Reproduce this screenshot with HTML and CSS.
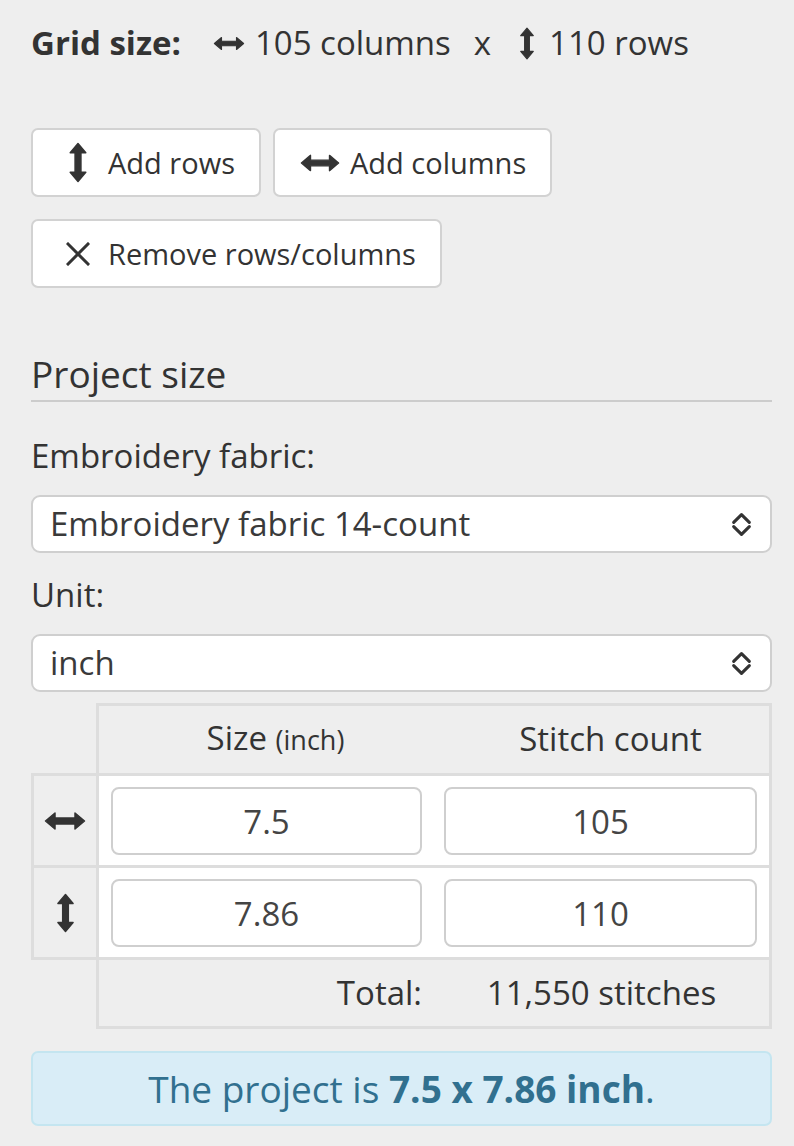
FILE: index.html
```html
<!DOCTYPE html>
<html lang="en">
<head>
<meta charset="utf-8">
<title>Project size</title>
<link rel="stylesheet" href="styles.css">
</head>
<body>
<div class="page">
  <div class="grid-size">
    <strong class="gs-label">Grid size:</strong>
    <svg class="ico-h-sm" viewBox="0 0 42 20" aria-hidden="true"><path d="M1.5 10 L11 2 V7 H31 V2 L40.5 10 L31 18 V13 H11 V18 Z"/></svg>
    <span class="gs-val">105 columns</span>
    <span class="gs-x">x</span>
    <svg class="ico-v-sm" viewBox="0 0 20 42" aria-hidden="true"><path d="M10 1.5 L18 11 H13 V31 H18 L10 40.5 L2 31 H7 V11 H2 Z"/></svg>
    <span class="gs-val">110 rows</span>
  </div>

  <div class="btn-row first">
    <button class="btn" type="button">
      <span class="btn-ico"><svg class="ico-v-btn" viewBox="0 0 20 42" aria-hidden="true"><path d="M10 1.5 L18 11 H13 V31 H18 L10 40.5 L2 31 H7 V11 H2 Z"/></svg></span>
      <span>Add rows</span>
    </button>
    <button class="btn" type="button">
      <span class="btn-ico"><svg class="ico-h-btn" viewBox="0 0 42 20" aria-hidden="true"><path d="M1.5 10 L11 2 V7 H31 V2 L40.5 10 L31 18 V13 H11 V18 Z"/></svg></span>
      <span>Add columns</span>
    </button>
  </div>
  <div class="btn-row second">
    <button class="btn" type="button">
      <span class="btn-ico"><svg class="ico-x" viewBox="0 0 24 24" aria-hidden="true"><path d="M2 2 L22 22 M22 2 L2 22"/></svg></span>
      <span>Remove rows/columns</span>
    </button>
  </div>

  <h2 class="section-title">Project size</h2>

  <label class="field-label">Embroidery fabric:</label>
  <div class="select">
    <span>Embroidery fabric 14-count</span>
    <svg class="chev" viewBox="0 0 20 24" aria-hidden="true"><path d="M2.5 10 L10 2.5 L17.5 10 M2.5 14 L10 21.5 L17.5 14"/></svg>
  </div>

  <label class="field-label">Unit:</label>
  <div class="select">
    <span>inch</span>
    <svg class="chev" viewBox="0 0 20 24" aria-hidden="true"><path d="M2.5 10 L10 2.5 L17.5 10 M2.5 14 L10 21.5 L17.5 14"/></svg>
  </div>

  <table class="size-table">
    <colgroup><col class="c0"><col><col></colgroup>
    <thead>
      <tr><th class="corner"></th><th class="hd l">Size <small>(inch)</small></th><th class="hd r">Stitch count</th></tr>
    </thead>
    <tbody>
      <tr>
        <th class="axis"><svg class="ico-h-tb" viewBox="0 0 42 20" aria-hidden="true"><path d="M1.5 10 L11 2 V7 H31 V2 L40.5 10 L31 18 V13 H11 V18 Z"/></svg></th>
        <td class="cell l"><input class="num" type="text" value="7.5"></td>
        <td class="cell r"><input class="num" type="text" value="105"></td>
      </tr>
      <tr>
        <th class="axis"><svg class="ico-v-tb" viewBox="0 0 20 42" aria-hidden="true"><path d="M10 1.5 L18 11 H13 V31 H18 L10 40.5 L2 31 H7 V11 H2 Z"/></svg></th>
        <td class="cell l"><input class="num" type="text" value="7.86"></td>
        <td class="cell r"><input class="num" type="text" value="110"></td>
      </tr>
    </tbody>
    <tfoot>
      <tr><td class="corner"></td><td class="total-label l">Total:</td><td class="total-value r">11,550 stitches</td></tr>
    </tfoot>
  </table>

  <div class="alert">The project is <strong>7.5 x 7.86 inch</strong>.</div>
</div>
</body>
</html>
```

FILE: styles.css
```css
html, body {
  margin: 0;
  padding: 0;
  background: #eeeeee;
}

.page {
  padding: 19px 22px 0 31px;
  font-family: "Open Sans", "DejaVu Sans", sans-serif;
  color: #333333;
  font-size: 33px;
  line-height: 48px;
}

svg path { fill: #333333; stroke: #333333; stroke-width: 1.5; stroke-linejoin: round; }

.grid-size {
  display: flex;
  align-items: center;
  height: 48px;
}
.gs-label { font-weight: 700; margin-right: 32px; }
.ico-h-sm { width: 32px; height: 15px; margin-right: 10px; }
.ico-v-sm { width: 16px; height: 33px; margin-right: 14px; }
.gs-x { margin: 0 28px 0 23px; }

.btn-row { display: flex; gap: 12px; }
.btn-row.first { margin-top: 61px; }
.btn-row.second { margin-top: 22px; }

.btn {
  display: inline-flex;
  align-items: center;
  gap: 10px;
  height: 69px;
  padding: 0 24px 0 25px;
  background: #ffffff;
  border: 2px solid #d2d2d2;
  border-radius: 7px;
  font-family: inherit;
  font-size: 29px;
  color: #333333;
  line-height: 40px;
}
.btn-ico { width: 40px; display: flex; justify-content: center; align-items: center; }
.ico-v-btn { width: 20px; height: 41px; }
.ico-h-btn { width: 40px; height: 20px; }
.ico-x { width: 24px; height: 24px; }
.ico-x path { fill: none; stroke-width: 3; stroke-linecap: square; }

.section-title {
  margin: 64px 0 0;
  padding: 0 0 5px;
  font-size: 37px;
  font-weight: 400;
  line-height: 43px;
  border-bottom: 2px solid #cccccc;
}

.field-label { display: block; margin-top: 30px; }
.select + .field-label { margin-top: 18px; }

.select {
  margin-top: 15px;
  height: 58px;
  box-sizing: border-box;
  display: flex;
  align-items: center;
  justify-content: space-between;
  padding: 0 18px 0 17px;
  background: #ffffff;
  border: 2px solid #cfcfcf;
  border-radius: 9px;
  color: #3a3a3a;
}
.chev { width: 21px; height: 25px; }
.chev path { fill: none; stroke-width: 3; stroke-linecap: round; stroke-linejoin: round; }

.size-table {
  margin-top: 11px;
  width: 100%;
  border-collapse: collapse;
  table-layout: fixed;
}
.c0 { width: 65px; }

.size-table .hd,
.size-table .axis,
.size-table .cell,
.size-table .total-label,
.size-table .total-value {
  border: 3px solid #dddddd;
}
.size-table .l { border-right: none; }
.size-table .r { border-left: none; }
.corner { border: none; padding: 0; }

.hd {
  background: #eeeeee;
  font-weight: 400;
  padding: 8px 4px 9px 22px;
  text-align: center;
}
.hd small { font-size: 27px; }

.axis {
  background: #eeeeee;
  padding: 0;
  text-align: center;
  vertical-align: middle;
}
.ico-h-tb { width: 42px; height: 20px; display: block; margin: 0 auto; }
.ico-v-tb { width: 19px; height: 42px; display: block; margin: 0 auto; }

.cell {
  background: #ffffff;
  padding: 11px 12px 10px;
}
.cell.r { padding-left: 10px; }
.num {
  display: block;
  box-sizing: border-box;
  width: 100%;
  height: 68px;
  border: 2px solid #cfcfcf;
  border-radius: 8px;
  background: #ffffff;
  font-family: inherit;
  font-size: 33px;
  color: #444444;
  text-align: center;
  padding: 0;
}

.total-label, .total-value {
  background: #eeeeee;
  padding: 9px 12px;
}
.total-label { text-align: right; }
.total-value { text-align: center; }

.alert {
  margin-top: 22px;
  height: 75px;
  box-sizing: border-box;
  display: flex;
  align-items: center;
  justify-content: center;
  background: #d9edf7;
  border: 2px solid #c4e5f0;
  border-radius: 7px;
  color: #31708f;
  font-size: 37px;
  white-space: pre;
}
.alert strong { font-weight: 700; }
```
